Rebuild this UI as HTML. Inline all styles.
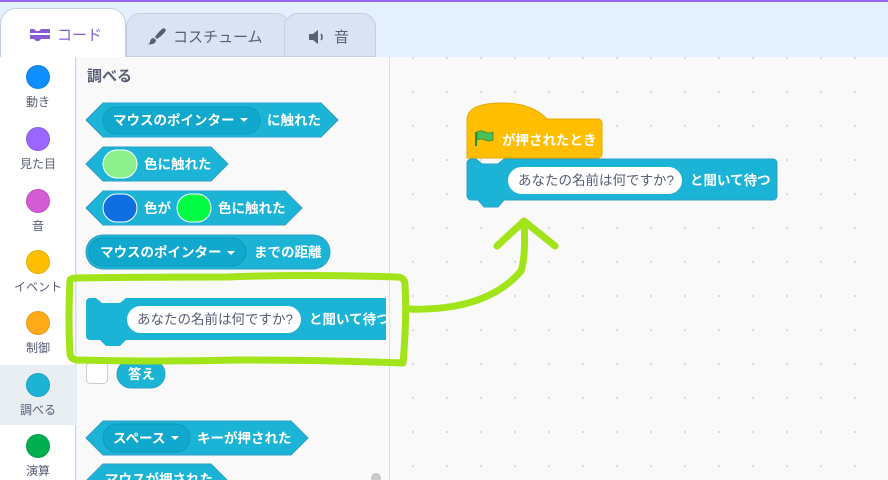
<!DOCTYPE html>
<html><head><meta charset="utf-8"><style>
*{margin:0;padding:0;box-sizing:border-box}
body{width:888px;height:480px;overflow:hidden;position:relative;background:#e5f0ff;font-family:"Liberation Sans","Noto Sans CJK JP",sans-serif}
.abs{position:absolute}
.cat{position:absolute;left:0;width:76px;text-align:center;font-size:12px;color:#575e75}
.cat i{display:block;width:24px;height:24px;border-radius:50%;margin:0 auto 4px;border:1px solid rgba(0,0,0,.1)}
svg text{font-family:"Liberation Sans","Noto Sans CJK JP",sans-serif}
</style></head><body>
<div class="abs" style="left:0;top:0;width:888px;height:2px;background:#9966ff"></div>
<div class="abs" style="left:126px;top:13px;width:164px;height:44px;background:#d9e3f2;border:1px solid #c4cfe0;border-radius:14px 14px 0 0"></div>
<div class="abs" style="left:284px;top:13px;width:92px;height:44px;background:#d9e3f2;border:1px solid #c4cfe0;border-radius:14px 14px 0 0"></div>
<div class="abs" style="left:0;top:8px;width:126px;height:50px;background:#fff;border:1px solid #c4cfe0;border-bottom:none;border-radius:16px 16px 0 0"></div>
<svg class="abs" style="left:28px;top:27px" width="24" height="14"><path d="M2 2h4l2 2h3l2-2h9v4H2zM2 8h20v4H13l-2 2H8l-2-2H2z" fill="#855cd6"/></svg>
<div class="abs" style="left:57px;top:24px;font-size:15px;color:#855cd6">コード</div>
<svg class="abs" style="left:146px;top:26px" width="20" height="20"><path d="M18 2c-3 1-7 6-9 9l2 2c3-2 8-6 9-9z M8 12c-3 0-4 2-4 4 0 1-1 2-3 2 4 1 9 0 9-4z" fill="#575e75"/></svg>
<div class="abs" style="left:173px;top:26px;font-size:15px;color:#575e75">コスチューム</div>
<svg class="abs" style="left:308px;top:29px" width="20" height="16"><path d="M1 5h4l5-4v14l-5-4H1z" fill="#575e75"/><path d="M13 5q2 3 0 6" stroke="#575e75" stroke-width="1.6" fill="none"/></svg>
<div class="abs" style="left:334px;top:26px;font-size:15px;color:#575e75">音</div>
<div class="abs" style="left:0;top:57px;width:76px;height:423px;background:#fff;border-right:1px solid #d9d9d9"></div>
<div class="abs" style="left:0;top:365px;width:76px;height:60px;background:#e9eef2"></div>
<div class="cat" style="top:65px"><i style="background:#0f8fff"></i>動き</div>
<div class="cat" style="top:127px"><i style="background:#9966ff"></i>見た目</div>
<div class="cat" style="top:189px"><i style="background:#d65cd6"></i>音</div>
<div class="cat" style="top:250px"><i style="background:#ffbf00"></i>イベント</div>
<div class="cat" style="top:311px"><i style="background:#ffab19"></i>制御</div>
<div class="cat" style="top:373px"><i style="background:#1cb4d6"></i>調べる</div>
<div class="cat" style="top:434px"><i style="background:#00b050"></i>演算</div>
<div class="abs" style="left:77px;top:57px;width:313px;height:423px;background:#f9f9f9;border-right:1px solid #ddd"></div>
<div class="abs" style="left:390px;top:57px;width:498px;height:423px;background:#f9f9f9;background-image:radial-gradient(#d8d8d8 1px,transparent 1.2px);background-size:34px 34px;background-position:6px 18px"></div>
<svg class="abs" style="left:0;top:0" width="888" height="480">
<g font-size="13.5" font-weight="bold" fill="#fff">
<text x="87" y="81" fill="#575e75" font-size="15">調べる</text>
<path d="M86 120l17-17h218l17 17-17 17H103z" fill="#1cb4d6" stroke="#2e9ec4"/>
<rect x="103" y="107" width="157" height="27" rx="13.5" fill="#10a8cc" stroke="#0e9abb"/>
<text x="113" y="125">マウスのポインター</text><path d="M240 118h8l-4 4z" fill="#fff"/>
<text x="267" y="125">に触れた</text>
<path d="M86 164l17-17h108l17 17-17 17H103z" fill="#1cb4d6" stroke="#2e9ec4"/>
<rect x="103" y="150" width="34" height="28" rx="14" fill="#8cf08c" stroke="#fff"/>
<text x="144" y="169">色に触れた</text>
<path d="M86 208l17-17h182l17 17-17 17H103z" fill="#1cb4d6" stroke="#2e9ec4"/>
<rect x="103" y="194" width="34" height="28" rx="14" fill="#0f6ee0" stroke="#fff"/>
<text x="144" y="213">色が</text>
<rect x="177" y="194" width="34" height="28" rx="14" fill="#00ff44" stroke="#fff"/>
<text x="218" y="213">色に触れた</text>
<rect x="86" y="235" width="244" height="34" rx="17" fill="#1cb4d6" stroke="#2e9ec4"/>
<rect x="89" y="238" width="157" height="28" rx="14" fill="#10a8cc" stroke="#0e9abb"/>
<text x="100" y="257">マウスのポインター</text><path d="M227 251h8l-4 4z" fill="#fff"/>
<text x="254" y="257">までの距離</text>
<path d="M90 298h6l6 5h18l6-5h260v42H126l-6 6h-14l-6-6h-10a4 4 0 0 1-4-4v-34a4 4 0 0 1 4-4z" fill="#1cb4d6"/>
<rect x="127" y="306" width="174" height="27" rx="13.5" fill="#fff"/>
<text x="137" y="324" fill="#575e75" font-weight="normal" font-size="13.5">あなたの名前は何ですか?</text>
<text x="309" y="324">と聞いて待つ</text>
<rect x="86.5" y="362.5" width="21" height="21" rx="4" fill="#fff" stroke="#ccc"/>
<rect x="117" y="360" width="48" height="28" rx="14" fill="#1cb4d6" stroke="#2e9ec4"/>
<text x="128" y="379">答え</text>
<path d="M86 438l17-17h188l17 17-17 17H103z" fill="#1cb4d6" stroke="#2e9ec4"/>
<rect x="103" y="424" width="87" height="28" rx="14" fill="#10a8cc" stroke="#0e9abb"/>
<text x="113" y="443">スペース</text><path d="M171 436h8l-4 4z" fill="#fff"/>
<text x="197" y="443">キーが押された</text>
<path d="M86 481l17-17h108l17 17z" fill="#1cb4d6" stroke="#2e9ec4"/>
<text x="105" y="484">マウスが押された</text>
<circle cx="376" cy="478" r="5" fill="#c8c8c8"/>
<path d="M467 120q0-17 35-17 30 0 45 16h51a4 4 0 0 1 4 4v31a4 4 0 0 1-4 4H467z" fill="#ffbf00" stroke="#e6a800"/>
<path d="M476 132v14" stroke="#0e9a3a" stroke-width="2"/>
<path d="M477 132q4-2 8 0t8 0v8q-4 2-8 0t-8 0z" fill="#4cbf56" stroke="#2e8f3a" stroke-width=".8"/>
<text x="502" y="145">が押されたとき</text>
<path d="M471 159h5l6 5h16l6-5h269a4 4 0 0 1 4 4v33a4 4 0 0 1-4 4H504l-6 7h-14l-6-7h-7a4 4 0 0 1-4-4v-33a4 4 0 0 1 4-4z" fill="#1cb4d6" stroke="#2e9ec4"/>
<rect x="508" y="167" width="174" height="27" rx="13.5" fill="#fff"/>
<text x="518" y="185" fill="#575e75" font-weight="normal">あなたの名前は何ですか?</text>
<text x="690" y="185">と聞いて待つ</text>
</g>
<g fill="none" stroke="#a2e41a" stroke-width="7" stroke-linecap="round" stroke-linejoin="round">
<path d="M70 280q-2 40 0 74 1 6 8 6 80 2 160 0 80 0 165 3 4-45 2-78 0-8-8-8-90-3-170 0-80 0-150 1-6 0-7 2"/>
<path d="M406 309q80 3 115-38 5-15 3-49"/>
<path d="M497 246l27-25 31 25"/>
</g>
</svg>
</body></html>
